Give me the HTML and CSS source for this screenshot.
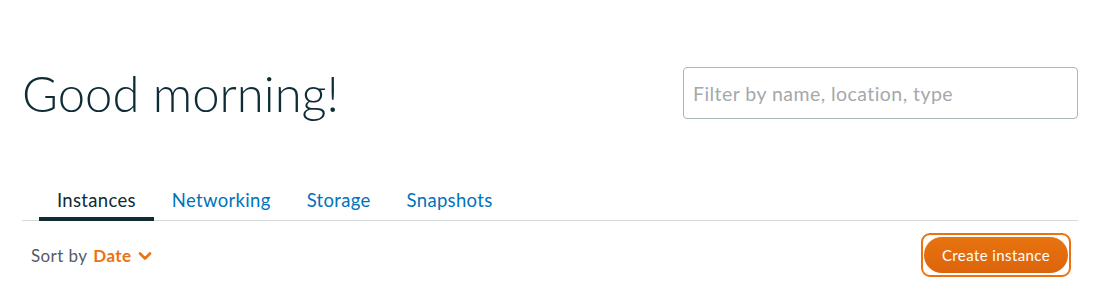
FILE: index.html
```html
<!DOCTYPE html>
<html>
<head>
<meta charset="utf-8">
<link rel="stylesheet" href="styles.css">
</head>
<body>
<main class="page">
  <header class="header">
    <h1 class="greeting">Good morning!</h1>
    <div class="search">
      <input class="search-input" type="text" placeholder="Filter by name, location, type">
    </div>
  </header>
  <nav class="tabs">
    <a class="tab tab-active">Instances</a>
    <a class="tab">Networking</a>
    <a class="tab">Storage</a>
    <a class="tab">Snapshots</a>
  </nav>
  <div class="toolbar">
    <div class="sort">
      <span class="sort-label">Sort by</span>
      <span class="sort-value">Date</span>
      <svg class="chevron" width="14" height="10" viewBox="0 0 14 10"><path d="M2 2.5 L7 7.5 L12 2.5" fill="none" stroke="#ec7211" stroke-width="2.6" stroke-linecap="round" stroke-linejoin="round"/></svg>
    </div>
    <div class="create-ring">
      <button class="create-btn">Create instance</button>
    </div>
  </div>
</main>
</body>
</html>
```
FILE: styles.css
```css
html, body {
  margin: 0;
  padding: 0;
  background: #ffffff;
}
body {
  font-family: "Lato", "Open Sans", sans-serif;
  color: #0e2c35;
}
.page {
  padding: 67px 24px 0 22px;
}
.header {
  display: flex;
  align-items: center;
  justify-content: space-between;
  height: 52px;
}
.greeting {
  margin: 0;
  font-weight: 300;
  font-size: 49px;
  line-height: 52px;
  color: #0e2c35;
  letter-spacing: 0;
}
.search {
  width: 395px;
  height: 52px;
  box-sizing: border-box;
  border: 1px solid #aab7b8;
  border-radius: 4px;
  display: flex;
  align-items: center;
  padding: 0 9px;
}
.search-input {
  border: 0;
  outline: none;
  width: 100%;
  font-family: "Lato", "Open Sans", sans-serif;
  font-size: 19.5px;
  letter-spacing: 0.45px;
  color: #333;
  background: transparent;
  padding: 0;
}
.search-input::placeholder {
  color: #a4a9ad;
}
.tabs {
  display: flex;
  margin-top: 69px;
  border-bottom: 1px solid #d5dbdb;
  padding-left: 17px;
}
.tab {
  font-size: 18.5px;
  letter-spacing: 0.32px;
  line-height: 24px;
  padding: 0 18px 5px;
  color: #0073bb;
  border-bottom: 4px solid transparent;
  margin-bottom: -1px;
}
.tab-active {
  color: #0e2c35;
  border-bottom-color: #0e2c35;
}
.toolbar {
  display: flex;
  align-items: center;
  justify-content: space-between;
  margin-top: 12px;
  padding-left: 9px;
  padding-right: 7px;
}
.sort {
  display: flex;
  align-items: center;
  gap: 6px;
  font-size: 17px;
  letter-spacing: 0.4px;
}
.sort-label {
  color: #545b64;
}
.sort-value {
  color: #ec7211;
  font-weight: 700;
}
.chevron {
  margin-left: 1px;
  margin-top: 1px;
}
.create-ring {
  border: 2px solid #ec7211;
  border-radius: 9px;
  padding: 2px 1px;
}
.create-btn {
  display: block;
  border: 0;
  border-radius: 18px;
  height: 36px;
  width: 144px;
  background: linear-gradient(#e8730f, #dc640b);
  color: #ffffff;
  font-family: "Lato", "Open Sans", sans-serif;
  font-size: 15px;
  letter-spacing: 0.4px;
  padding: 0;
}
```
